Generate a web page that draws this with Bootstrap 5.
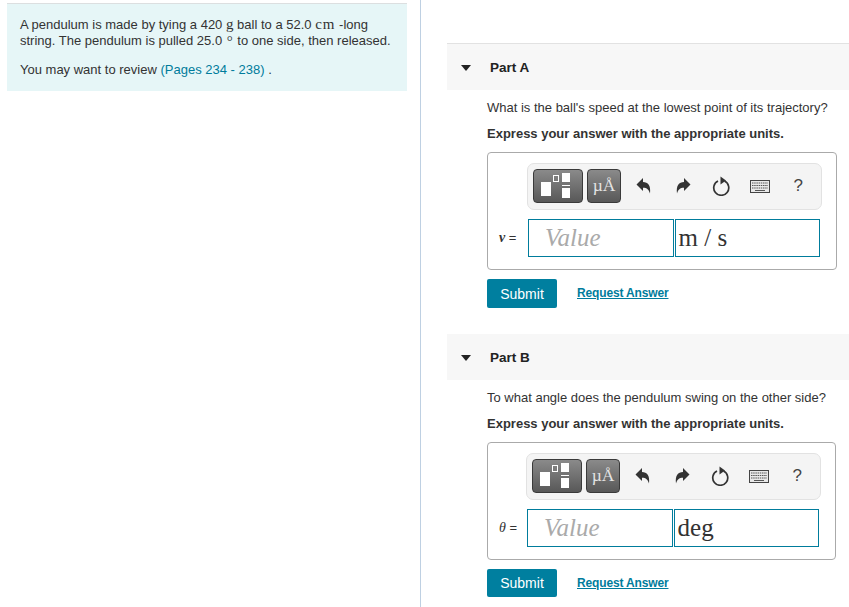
<!DOCTYPE html>
<html lang="en">
<head>
<meta charset="utf-8">
<title>Pendulum</title>
<link href="https://cdn.jsdelivr.net/npm/bootstrap@5.3.0/dist/css/bootstrap.min.css" rel="stylesheet">
<style>
html,body{height:100%;overflow:hidden}
body{font-family:"Liberation Sans",Arial,sans-serif;font-size:13px;line-height:16px;color:#333;background:#fff}
.shell{height:607px}
.leftcol{width:421px;flex:none;border-right:1px solid #bed0e2;padding:3px 13px 0 7px}
.intro{background:#e6f6f7;border-top:1px solid #dcdfe0;height:88px;padding:13px 13px 0 13px}
.intro p{margin:0}
.intro p+p{margin-top:13px}
.serif{font-family:"Liberation Serif",serif;font-size:15px;line-height:14px}
.serif.wide{letter-spacing:1px}
.deg{font-family:"Liberation Serif",serif;font-size:15px;line-height:14px;margin:0 1px 0 1px;vertical-align:-1px}
.lnk{color:#007c9c;text-decoration:none}
.rightcol{flex:1;min-width:0;padding:43px 0 0 26px}
.parthead{height:47px;background:#f7f7f7;border-top:1px solid #e2e2e2;padding:1px 0 0 14px;gap:19px;font-weight:700;font-size:13.5px;color:#222}
.parthead.second{height:46px;border-top:0;margin-top:26px}
.caret{width:0;height:0;border-left:5.5px solid transparent;border-right:5.5px solid transparent;border-top:6px solid #222}
.partbody{padding:10px 12px 0 40px}
.q{margin:0;height:16px;white-space:nowrap}
.ins{margin:10px 0 0;font-weight:700;height:16px;white-space:nowrap}
.answerbox{margin-top:10px;border:1px solid #aaa;border-radius:4px;height:118px;padding:10px 15px 0 0}
.tbar{margin-left:39px;width:295px;height:47px;background:#f4f4f4;border:1px solid #e2e2e2;border-radius:7px;padding:5px 0 0 5px}
.tb{height:34px;border:1px solid #3a3a3a;border-radius:4px;background:linear-gradient(#8a8a8a,#585858);padding:0;display:flex;align-items:center;justify-content:center}
.tb1{width:50px}
.tb2{width:34px;margin-left:4px;font-family:"Liberation Serif",serif;font-size:17.5px;color:#e4e4e4;line-height:1}
.ic{width:38.5px;display:flex;justify-content:center;align-items:center;height:34px;color:#333}
.ic.first{margin-left:4px}
.qm{font-size:17px;color:#444}
.ansrow{margin-top:9px;height:38px}
.vlabel{width:40px;flex:none;padding-left:11px;font-size:13px;color:#333;white-space:nowrap}
.vlabel i{font-family:"Liberation Serif",serif;font-size:14px;font-weight:700}
.vbox{width:146px;height:38px;border:1px solid #007c9c;font-family:"Liberation Serif",serif;font-size:25px;line-height:36px;color:#333;margin-right:1px;background:#fff}
.vbox.val{font-style:italic;color:#aaa;padding-left:16px}
.vbox.unit{padding-left:3px}
.actions{margin-top:9px;gap:20px}
.subbtn{width:70px;height:29px;background:#007f9f;color:#fff;border:0;border-radius:2px;font-size:14px;padding:0}
.reqlink{color:#007c9c;font-weight:700;font-size:12px;letter-spacing:-.15px;text-decoration:underline;margin-top:-2px}
.lower .tbar{margin-left:38px}
.lower .vlabel{width:39px}
.lower .vlabel i{font-weight:400}
.lower .answerbox{margin-right:1px}
.lower .subbtn{height:28px}
.lower .reqlink{margin-top:0}
</style>
</head>
<body>
<div class="d-flex shell">
  <div class="leftcol">
    <div class="intro">
      <p>A pendulum is made by tying a 420 <span class="serif">g</span> ball to a 52.0 <span class="serif wide">cm</span> -long string. The pendulum is pulled 25.0 <span class="deg">&deg;</span> to one side, then released.</p>
      <p>You may want to review <a class="lnk" href="#">(Pages 234 - 238)</a> .</p>
    </div>
  </div>
  <div class="rightcol">
    <div class="parthead d-flex align-items-center"><span class="caret"></span><span>Part A</span></div>
    <div class="partbody">
      <p class="q">What is the ball's speed at the lowest point of its trajectory?</p>
      <p class="ins">Express your answer with the appropriate units.</p>
      <div class="answerbox">
        <div class="tbar d-flex">
          <button class="tb tb1" type="button" aria-label="templates"><svg width="44" height="28" viewBox="0 0 44 28"><rect x="5" y="10" width="10" height="14" fill="#fff"/><rect x="17.500" y="3.500" width="5" height="6" fill="none" stroke="#fff"/><rect x="26" y="1" width="8" height="9" fill="#fff"/><rect x="26" y="13" width="8" height="1" fill="#fff"/><rect x="26" y="16" width="8" height="10" fill="#fff"/></svg></button>
          <button class="tb tb2" type="button">&micro;&Aring;</button>
          <span class="ic first"><svg width="16" height="18" viewBox="0 0 16 18"><path d="M.5 7.500 7 1v4c5 0 8 3.500 7 11.500-1.100-4-3-5.800-7-5.800V14z" fill="#333"/></svg></span>
          <span class="ic"><svg width="16" height="18" viewBox="0 0 16 18"><path d="M15.500 7.500 9 1v4C4 5 1 8.500 2 16.500c1.100-4 3-5.800 7-5.800V14z" fill="#333"/></svg></span>
          <span class="ic"><svg width="19" height="20" viewBox="0 0 19 20"><path d="M12.500 5A7.500 7.500 0 1 1 6 5" fill="none" stroke="#333" stroke-width="1.700"/><path d="M8.500 .5 14 4.500 8.500 8.500z" fill="#333"/></svg></span>
          <span class="ic"><svg width="20" height="13" viewBox="0 0 20 13"><rect x=".5" y=".5" width="19" height="12" fill="#e8e8e8" stroke="#444"/><path d="M2 3h16M2 5.500h16M2 8h16" stroke="#555" stroke-dasharray="1.500 .7"/><path d="M5 10.500h10" stroke="#555"/></svg></span>
          <span class="ic qm">?</span>
        </div>
        <div class="ansrow d-flex align-items-center">
          <span class="vlabel"><i>v</i> =</span>
          <div class="vbox val">Value</div>
          <div class="vbox unit">m / s</div>
        </div>
      </div>
      <div class="actions d-flex align-items-center">
        <button class="subbtn" type="button">Submit</button>
        <a class="reqlink" href="#">Request Answer</a>
      </div>
    </div>
    <div class="parthead second d-flex align-items-center"><span class="caret"></span><span>Part B</span></div>
    <div class="partbody lower">
      <p class="q">To what angle does the pendulum swing on the other side?</p>
      <p class="ins">Express your answer with the appropriate units.</p>
      <div class="answerbox">
        <div class="tbar d-flex">
          <button class="tb tb1" type="button" aria-label="templates"><svg width="44" height="28" viewBox="0 0 44 28"><rect x="5" y="10" width="10" height="14" fill="#fff"/><rect x="17.500" y="3.500" width="5" height="6" fill="none" stroke="#fff"/><rect x="26" y="1" width="8" height="9" fill="#fff"/><rect x="26" y="13" width="8" height="1" fill="#fff"/><rect x="26" y="16" width="8" height="10" fill="#fff"/></svg></button>
          <button class="tb tb2" type="button">&micro;&Aring;</button>
          <span class="ic first"><svg width="16" height="18" viewBox="0 0 16 18"><path d="M.5 7.500 7 1v4c5 0 8 3.500 7 11.500-1.100-4-3-5.800-7-5.800V14z" fill="#333"/></svg></span>
          <span class="ic"><svg width="16" height="18" viewBox="0 0 16 18"><path d="M15.500 7.500 9 1v4C4 5 1 8.500 2 16.500c1.100-4 3-5.800 7-5.800V14z" fill="#333"/></svg></span>
          <span class="ic"><svg width="19" height="20" viewBox="0 0 19 20"><path d="M12.500 5A7.500 7.500 0 1 1 6 5" fill="none" stroke="#333" stroke-width="1.700"/><path d="M8.500 .5 14 4.500 8.500 8.500z" fill="#333"/></svg></span>
          <span class="ic"><svg width="20" height="13" viewBox="0 0 20 13"><rect x=".5" y=".5" width="19" height="12" fill="#e8e8e8" stroke="#444"/><path d="M2 3h16M2 5.500h16M2 8h16" stroke="#555" stroke-dasharray="1.500 .7"/><path d="M5 10.500h10" stroke="#555"/></svg></span>
          <span class="ic qm">?</span>
        </div>
        <div class="ansrow d-flex align-items-center">
          <span class="vlabel"><i>&theta;</i> =</span>
          <div class="vbox val">Value</div>
          <div class="vbox unit">deg</div>
        </div>
      </div>
      <div class="actions d-flex align-items-center">
        <button class="subbtn" type="button">Submit</button>
        <a class="reqlink" href="#">Request Answer</a>
      </div>
    </div>
  </div>
</div>
<script src="https://cdn.jsdelivr.net/npm/bootstrap@5.3.0/dist/js/bootstrap.bundle.min.js"></script>
</body>
</html>
